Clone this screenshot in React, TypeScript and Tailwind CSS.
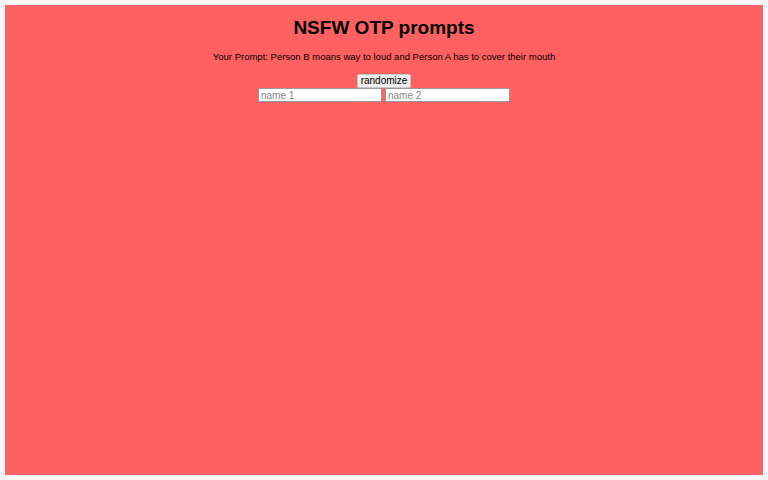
import { useState } from "react";

const prompts = [
	"Person B moans way to loud and Person A has to cover their mouth",
];

export default function App() {
	const [prompt, setPrompt] = useState(prompts[0]);
	const [nameA, setNameA] = useState("");
	const [nameB, setNameB] = useState("");

	const randomize = () => {
		setPrompt(prompts[Math.floor(Math.random() * prompts.length)]);
	};

	return (
		<div className="min-h-screen bg-[#f6f6f6] p-[5px] font-['Liberation_Sans',Arial,sans-serif]">
			<div className="h-[470px] bg-[#ff6060] flex flex-col items-center text-black">
				<h1 className="mt-[11px] text-[19px] leading-[24px] font-bold">NSFW OTP prompts</h1>
				<p className="mt-[11px] text-[9.5px] leading-[12px]">Your Prompt: {prompt}</p>
				<button
					onClick={randomize}
					className="mt-[11px] h-[14px] px-[3px] text-[10px] leading-[12px] bg-[#efefef] border border-[#c8c8c8] rounded-[2px]"
				>
					randomize
				</button>
				<div className="flex gap-[3px]">
					<input
						className="w-[124px] h-[14px] px-[2px] text-[10px] bg-white border border-[#999] placeholder:text-[#888] outline-none"
						placeholder="name 1"
						value={nameA}
						onChange={e => setNameA(e.target.value)}
					/>
					<input
						className="w-[125px] h-[14px] px-[2px] text-[10px] bg-white border border-[#999] placeholder:text-[#888] outline-none"
						placeholder="name 2"
						value={nameB}
						onChange={e => setNameB(e.target.value)}
					/>
				</div>
			</div>
		</div>
	);
}
